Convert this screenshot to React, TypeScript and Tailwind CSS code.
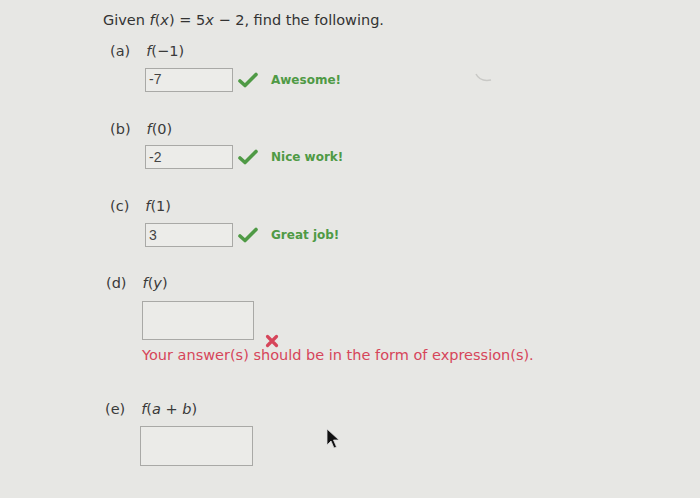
import React from 'react';

const font = { fontFamily: '"DejaVu Sans", Verdana, sans-serif' };

function Check() {
  return (
    <svg width="20" height="16" viewBox="0 0 20 16" className="shrink-0">
      <path d="M2 9 L7 13.5 L18 2.5" fill="none" stroke="#4f9a45" strokeWidth="3.6" strokeLinecap="round" strokeLinejoin="round" />
    </svg>
  );
}

function Cross() {
  return (
    <svg width="14" height="14" viewBox="0 0 14 14">
      <path d="M2.5 2.5 L11.5 11.5 M11.5 2.5 L2.5 11.5" stroke="#d6455a" strokeWidth="3.2" strokeLinecap="round" />
    </svg>
  );
}

function F({ children }: { children: React.ReactNode }) {
  return (
    <span>
      <i>f</i>({children})
    </span>
  );
}

function Solved({ label, expr, value, msg }: { label: string; expr: React.ReactNode; value: string; msg: string }) {
  return (
    <div>
      <div className="flex gap-4 text-[14.5px] text-[#3a3a3a] pl-[7px]">
        <span>({label})</span>
        {expr}
      </div>
      <div className="flex items-center mt-[5px] ml-[42px]">
        <div className="w-[88px] h-[24px] border border-[#a9a9a6] bg-[#ecece9] text-[14px] text-[#444] px-[3px] flex items-center" style={{ fontFamily: '"Liberation Sans", Arial, sans-serif' }}>
          {value}
        </div>
        <div className="ml-[5px]"><Check /></div>
        <span className="ml-[13px] text-[12px] font-bold text-[#4f9a45]">{msg}</span>
      </div>
    </div>
  );
}

export default function App() {
  return (
    <div className="relative w-[700px] h-[498px] overflow-hidden bg-[#e7e7e4]" style={font}>
      <div className="pl-[103px] pt-[10px]">
        <div className="text-[14.5px] text-[#333]">
          Given <i>f</i>(<i>x</i>) = 5<i>x</i> − 2, find the following.
        </div>
        <div className="mt-[9px] flex flex-col gap-[27px]">
          <Solved label="a" expr={<F>−1</F>} value="-7" msg="Awesome!" />
          <Solved label="b" expr={<F>0</F>} value="-2" msg="Nice work!" />
          <Solved label="c" expr={<F>1</F>} value="3" msg="Great job!" />
        </div>
        <div className="mt-[26px]">
          <div className="flex gap-4 text-[14.5px] text-[#3a3a3a] pl-[3px]">
            <span>(d)</span>
            <F><i>y</i></F>
          </div>
          <div className="flex items-end mt-[6px] ml-[39px]">
            <div className="w-[112px] h-[39px] border border-[#a9a9a6] bg-[#ebebe8]" />
            <div className="ml-[11px] -mb-[8px]"><Cross /></div>
          </div>
          <div className="mt-[5px] ml-[39px] text-[14.5px] text-[#d6455a]">Your answer(s) should be in the form of expression(s).</div>
        </div>
        <div className="mt-[32px]">
          <div className="flex gap-4 text-[14.5px] text-[#3a3a3a] pl-[2px]">
            <span>(e)</span>
            <F><i>a</i> + <i>b</i></F>
          </div>
          <div className="mt-[6px] ml-[37px] w-[113px] h-[40px] border border-[#a9a9a6] bg-[#ebebe8]" />
        </div>
      </div>
      <svg className="absolute left-[326px] top-[428px]" width="16" height="22" viewBox="0 0 16 22">
        <path d="M1 1 L1 17 L5 13 L8 20 L10.5 19 L7.5 12 L13 12 Z" fill="#111" stroke="#ddd" strokeWidth="0.8" />
      </svg>
      <svg className="absolute left-[474px] top-[72px]" width="20" height="12" viewBox="0 0 20 12">
        <path d="M2 2 Q6 10 17 8" fill="none" stroke="#c9c9c6" strokeWidth="1.5" />
      </svg>
    </div>
  );
}
